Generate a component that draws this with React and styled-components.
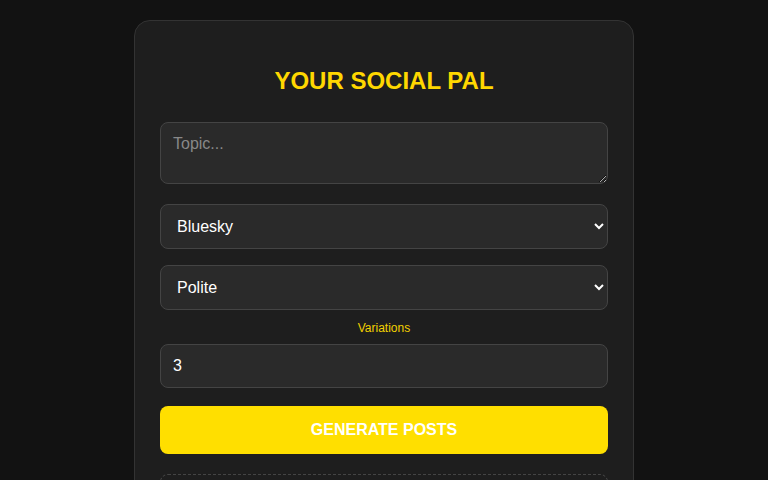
import React, { useState } from 'react';
import styled, { createGlobalStyle } from "styled-components";

const GlobalStyle = createGlobalStyle`
  html, body {
    margin: 0;
    padding: 0;
    background: #121212;
    font-family: "Liberation Sans", Arial, sans-serif;
  }
`;

const Page = styled.div`
  display: flex;
  justify-content: center;
  padding-top: 20px;
`;

const Card = styled.div`
  width: 500px;
  box-sizing: border-box;
  background: #1e1e1e;
  border: 1px solid #333;
  border-radius: 16px;
  padding: 25px;
  display: flex;
  flex-direction: column;
`;

const Title = styled.h1`
  margin: 21px 0 27px;
  text-align: center;
  color: #ffd700;
  font-size: 24px;
  font-weight: bold;
`;

const fieldBase = `
  width: 100%;
  box-sizing: border-box;
  background: #2a2a2a;
  color: #fff;
  border: 1px solid #444;
  border-radius: 8px;
  padding: 12px;
  font-size: 16px;
  font-family: "Liberation Sans", Arial, sans-serif;
  outline: none;
  color-scheme: dark;
`;

const TopicArea = styled.textarea`
  ${fieldBase}
  height: 62px;
  resize: vertical;
  &::placeholder {
    color: #888;
  }
`;

const Select = styled.select`
  ${fieldBase}
  height: 45px;
  margin-top: ${p => p.$gap}px;
`;

const Label = styled.label`
  margin: 11px 0 9px;
  text-align: center;
  color: #f2d000;
  font-size: 12px;
`;

const NumberInput = styled.input`
  ${fieldBase}
  height: 44px;
`;

const GenerateButton = styled.button`
  margin-top: 18px;
  height: 48px;
  border: none;
  border-radius: 8px;
  background: #ffdf00;
  color: #fff;
  font-size: 16px;
  font-weight: bold;
  font-family: "Liberation Sans", Arial, sans-serif;
  text-transform: uppercase;
  cursor: pointer;
`;

const Output = styled.div`
  margin-top: 20px;
  min-height: 120px;
  border: 1px dashed #444;
  border-radius: 8px;
`;

export default function App() {
  const [topic, setTopic] = useState("");
  const [platform, setPlatform] = useState("Bluesky");
  const [tone, setTone] = useState("Polite");
  const [count, setCount] = useState(3);

  return (
    <Page>
      <GlobalStyle />
      <Card>
        <Title>YOUR SOCIAL PAL</Title>
        <TopicArea
          placeholder="Topic..."
          value={topic}
          onChange={e => setTopic(e.target.value)}
        />
        <Select $gap={20} value={platform} onChange={e => setPlatform(e.target.value)}>
          <option>Bluesky</option>
          <option>Twitter</option>
          <option>LinkedIn</option>
        </Select>
        <Select $gap={16} value={tone} onChange={e => setTone(e.target.value)}>
          <option>Polite</option>
          <option>Casual</option>
          <option>Funny</option>
        </Select>
        <Label htmlFor="variations">Variations</Label>
        <NumberInput
          id="variations"
          type="number"
          min="1"
          max="10"
          value={count}
          onChange={e => setCount(e.target.value)}
        />
        <GenerateButton>Generate Posts</GenerateButton>
        <Output />
      </Card>
    </Page>
  );
}
